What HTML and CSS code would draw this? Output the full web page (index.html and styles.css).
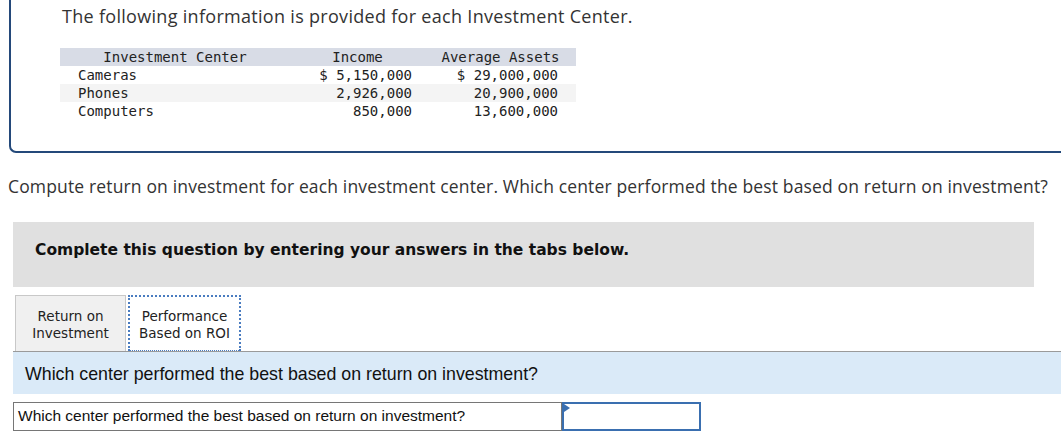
FILE: index.html
```html
<!DOCTYPE html>
<html>
<head>
<meta charset="utf-8">
<link rel="stylesheet" href="styles.css">
</head>
<body>
<div class="card">
  <p class="intro">The following information is provided for each Investment Center.</p>
  <table class="data">
    <thead>
      <tr><th class="c1">Investment Center</th><th class="c2">Income</th><th class="c3">Average Assets</th></tr>
    </thead>
    <tbody>
      <tr><td class="c1">Cameras</td><td class="c2">$ 5,150,000</td><td class="c3">$ 29,000,000</td></tr>
      <tr class="alt"><td class="c1">Phones</td><td class="c2">2,926,000</td><td class="c3">20,900,000</td></tr>
      <tr><td class="c1">Computers</td><td class="c2">850,000</td><td class="c3">13,600,000</td></tr>
    </tbody>
  </table>
</div>
<p class="question">Compute return on investment for each investment center. Which center performed the best based on return on investment?</p>
<div class="instruct">Complete this question by entering your answers in the tabs below.</div>
<div class="tabs">
  <div class="tab">Return on<br>Investment</div>
  <div class="tab active">Performance<br>Based on ROI</div>
</div>
<div class="panel">Which center performed the best based on return on investment?</div>
<div class="answer">
  <div class="label">Which center performed the best based on return on investment?</div>
  <div class="input"><span class="tri"></span></div>
</div>
</body>
</html>
```
FILE: styles.css
```css
* { box-sizing: border-box; }
body {
  margin: 0;
  width: 1061px;
  height: 443px;
  overflow: hidden;
  background: #fff;
  font-family: "Liberation Sans", Arial, sans-serif;
  color: #222;
}
.card {
  margin-left: 9px;
  width: 1070px;
  height: 153px;
  border-left: 2px solid #24497a;
  border-bottom: 2px solid #24497a;
  border-bottom-left-radius: 7px;
  padding: 5px 0 0 49px;
}
.intro {
  margin: 0 0 0 2px;
  font-family: "Open Sans", "Liberation Sans", sans-serif;
  font-size: 18px;
  line-height: 22px;
  color: #333;
  letter-spacing: 0.3px;
}
.data {
  margin-top: 21px;
  border-collapse: collapse;
  font-family: "DejaVu Sans Mono", "Liberation Mono", monospace;
  font-size: 14px;
  color: #222;
}
.data th, .data td {
  height: 18px;
  padding: 0;
  font-weight: normal;
  line-height: 18px;
}
.data thead tr { background: #d8dce6; }
.data tbody tr.alt { background: #f4f4f4; }
.data .c1 { width: 230px; }
.data .c2 { width: 135px; }
.data .c3 { width: 151px; }
.data th { text-align: center; }
.data td.c1 { padding-left: 18px; text-align: left; }
.data td.c2 { text-align: right; padding-right: 13px; }
.data td.c3 { text-align: right; padding-right: 18px; }
.question {
  margin: 22px 0 0 8px;
  font-family: "Open Sans", "Liberation Sans", sans-serif;
  font-size: 17.5px;
  line-height: 22px;
  color: #333;
  letter-spacing: 0.15px;
  white-space: nowrap;
}
.instruct {
  margin: 25px 0 0 13px;
  width: 1021px;
  height: 65px;
  background: #e0e0e0;
  padding: 18px 0 0 22px;
  font-family: "DejaVu Sans", Verdana, sans-serif;
  font-weight: bold;
  font-size: 15.5px;
  line-height: 20px;
  color: #111;
}
.tabs {
  display: flex;
  margin: 8px 0 0 15px;
  gap: 2px;
  height: 56px;
}
.tab {
  width: 111px;
  height: 56px;
  background: #f0f0f0;
  border: 1px solid #c8c8c8;
  border-bottom: none;
  font-family: "DejaVu Sans", Verdana, sans-serif;
  font-size: 13.5px;
  line-height: 17px;
  text-align: center;
  color: #222;
  padding-top: 12px;
}
.tab.active {
  width: 113px;
  background: #fff;
  border: 1px dotted #4a7cc0;
  border-width: 2px 2px 1px 2px;
  padding-top: 11px;
}
.panel {
  margin-left: 13px;
  height: 43px;
  border-top: 1px solid #9a9a9a;
  background: #daeaf8;
  padding: 11px 0 0 12px;
  font-size: 17.8px;
  line-height: 22px;
  color: #111;
}
.answer {
  display: flex;
  margin: 8px 0 0 13px;
  height: 29px;
}
.label {
  width: 549px;
  border: 1px solid #767676;
  border-right: none;
  padding: 3px 0 0 4px;
  font-size: 15.5px;
  line-height: 20px;
  color: #111;
}
.input {
  position: relative;
  width: 139px;
  border: 2px solid #3a6fb0;
  box-shadow: -1px 0 0 #767676;
}
.tri {
  position: absolute;
  left: 0;
  top: 0;
  width: 0;
  height: 0;
  border-top: 4px solid transparent;
  border-bottom: 4px solid transparent;
  border-left: 6px solid #3a6fb0;
}
```
